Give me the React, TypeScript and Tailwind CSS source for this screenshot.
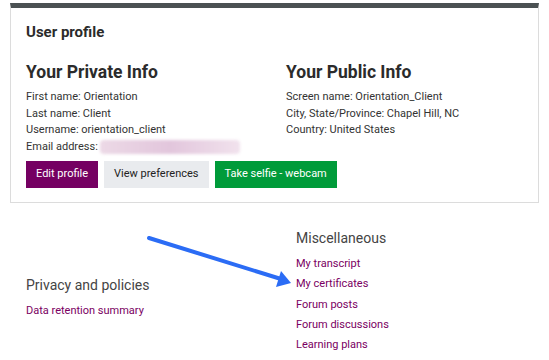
export default function App() {
  return (
    <div className="relative w-[549px] h-[360px] bg-white overflow-hidden font-['Roboto',sans-serif] text-[#333]">
      {/* User profile card */}
      <div className="mt-[3px] mx-[10px] border border-[#dcdcdc] border-t-[5px] border-t-[#4b5153] px-[15px] pt-[15px] pb-[14px]">
        <h2 className="text-[15px] leading-[18px] font-bold text-[#2b2b2b]">User profile</h2>
        <div className="flex mt-[20px]">
          <div className="w-[260px]">
            <h3 className="text-[17.5px] leading-[23px] font-bold text-[#2b2b2b]">Your Private Info</h3>
            <div className="mt-[5px] text-[11px] leading-[16.5px]">
              <div>First name: Orientation</div>
              <div>Last name: Client</div>
              <div>Username: orientation_client</div>
              <div className="flex items-center">
                <span>Email address:</span>
                <span className="ml-[2px] w-[140px] h-[14px] bg-gradient-to-r from-[#ecd9e6] via-[#e2c6dc] to-[#f1e2ed] blur-[1.5px] rounded-sm" />
              </div>
            </div>
          </div>
          <div className="flex-1">
            <h3 className="text-[17.5px] leading-[23px] font-bold text-[#2b2b2b]">Your Public Info</h3>
            <div className="mt-[5px] text-[11px] leading-[16.5px]">
              <div>Screen name: Orientation_Client</div>
              <div>City, State/Province: Chapel Hill, NC</div>
              <div>Country: United States</div>
            </div>
          </div>
        </div>
        <div className="flex gap-[6px] mt-[6px] text-[11px]">
          <button className="h-[27px] px-[10px] bg-[#750062] text-white">Edit profile</button>
          <button className="h-[27px] px-[10px] bg-[#e9ebee] text-[#222]">View preferences</button>
          <button className="h-[27px] px-[10px] bg-[#009b3a] text-white">Take selfie - webcam</button>
        </div>
      </div>

      {/* Lower sections */}
      <div className="flex pl-[26px] mt-[26px]">
        <div className="w-[270px] pt-[47px]">
          <h4 className="text-[14px] leading-[18px] text-[#444]">Privacy and policies</h4>
          <div className="mt-[7px] text-[11px] leading-[20.3px] text-[#7a0062]">Data retention summary</div>
        </div>
        <div className="flex-1">
          <h4 className="text-[14px] leading-[18px] text-[#444]">Miscellaneous</h4>
          <ul className="mt-[7px] text-[11px] leading-[20.3px] text-[#7a0062]">
            <li>My transcript</li>
            <li>My certificates</li>
            <li>Forum posts</li>
            <li>Forum discussions</li>
            <li>Learning plans</li>
          </ul>
        </div>
      </div>

      {/* Annotation arrow */}
      <svg className="absolute left-0 top-0 pointer-events-none" width="549" height="360">
        <line x1="149" y1="238" x2="281" y2="279" stroke="#2b6cf5" strokeWidth="4" strokeLinecap="round" />
        <polygon points="291,283 276,287 281,271" fill="#2b6cf5" />
      </svg>
    </div>
  );
}
